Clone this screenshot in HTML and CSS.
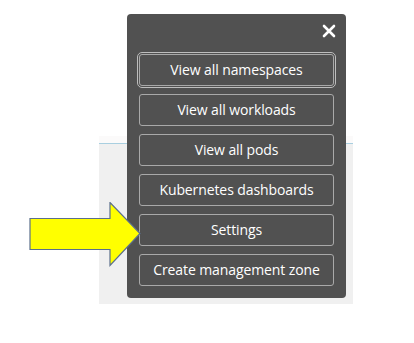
FILE: index.html
```html
<!DOCTYPE html>
<html>
  <head>
    <link rel="stylesheet" href="styles.css">
  </head>
  <body>
    <div class="page">
      <div class="backdrop">
        <div class="backdrop_top"></div>
        <div class="backdrop_body"></div>
      </div>

      <div class="menu">
        <div class="menu_header">
          <button class="close" title="Close">
            <svg width="14" height="14" viewBox="0 0 14 14">
              <path d="M2 2 L12 12 M12 2 L2 12" stroke="#fff" stroke-width="2.6" stroke-linecap="round" fill="none"/>
            </svg>
          </button>
        </div>
        <div class="menu_list">
          <button class="item focused">View all namespaces</button>
          <button class="item">View all workloads</button>
          <button class="item">View all pods</button>
          <button class="item">Kubernetes dashboards</button>
          <button class="item">Settings</button>
          <button class="item">Create management zone</button>
        </div>
      </div>

      <svg class="arrow" width="120" height="70" viewBox="0 0 120 70">
        <polygon points="1,16.5 81,16.5 81,0.5 111,31.5 81,63.5 81,47.5 1,47.5" fill="#ffff00" stroke="#5b6f8c" stroke-width="1.2"/>
      </svg>
    </div>
  </body>
</html>
```

FILE: styles.css
```css
*{
    margin:0;
    padding:0;
    box-sizing:border-box;
}
body{
    background:#fff;
    font-family:"Open Sans", "Noto Sans", sans-serif;
}
.page{
    position:relative;
    width:414px;
    height:343px;
    overflow:hidden;
    padding:136px 0 0 99px;
}
.backdrop{
    width:254px;
    height:168px;
    display:flex;
    flex-direction:column;
}
.backdrop_top{
    height:8px;
    background:#fbfafa;
    border-bottom:1px solid #a9cfe0;
}
.backdrop_body{
    flex:1;
    background:#f0f0f0;
}

.menu{
    position:absolute;
    left:127px;
    top:14px;
    width:219px;
    height:284px;
    background:#515151;
    border-radius:4px;
    padding:0 12px 12px;
}
.menu_header{
    height:40px;
    display:flex;
    justify-content:flex-end;
    align-items:center;
    padding-bottom:6px;
    margin-right:-3px;
}
.close{
    background:none;
    border:none;
    width:16px;
    height:16px;
    display:flex;
    align-items:center;
    justify-content:center;
    cursor:pointer;
}
.menu_list{
    display:flex;
    flex-direction:column;
    gap:8px;
}
.item{
    height:32px;
    width:100%;
    background:#515151;
    border:1px solid #a9a9a9;
    border-radius:3px;
    color:#fff;
    font-family:"Open Sans", "Noto Sans", sans-serif;
    font-size:14px;
    font-weight:500;
    letter-spacing:-0.1px;
    padding-bottom:2px;
    cursor:pointer;
}
.item.focused{
    outline:1px solid #bdbdbd;
    outline-offset:1px;
}
.arrow{
    position:absolute;
    left:28.5px;
    top:201.5px;
}
```
